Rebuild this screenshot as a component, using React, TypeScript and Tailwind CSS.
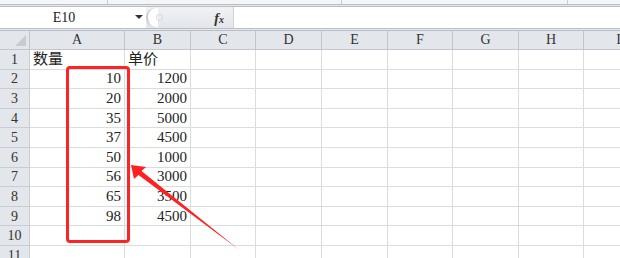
import React from "react";

const cols = [
  { k: "A", w: 95 },
  { k: "B", w: 66 },
  { k: "C", w: 65 },
  { k: "D", w: 66 },
  { k: "E", w: 66 },
  { k: "F", w: 65 },
  { k: "G", w: 66 },
  { k: "H", w: 65 },
  { k: "I", w: 70 },
];

const rows: [string, string][] = [
  ["数量", "单价"],
  ["10", "1200"],
  ["20", "2000"],
  ["35", "5000"],
  ["37", "4500"],
  ["50", "1000"],
  ["56", "3000"],
  ["65", "3500"],
  ["98", "4500"],
  ["", ""],
  ["", ""],
];

export default function App() {
  return (
    <div className="relative w-[620px] h-[258px] overflow-hidden bg-white text-[#222] font-['Liberation_Serif','Noto_Sans_CJK_SC',serif]">
      {/* ribbon bottom */}
      <div className="flex h-[4px] bg-[#f4f5f7]">
        <div className="w-[108px] border-r border-[#c9ccd1]" />
        <div className="w-[234px] border-r border-[#c9ccd1]" />
        <div className="w-[226px] border-r border-[#c9ccd1]" />
        <div className="flex-1" />
      </div>
      <div className="h-[3px] border-y border-[#b9bec5] bg-[#e6e8eb]" />
      {/* formula bar */}
      <div className="flex h-[21px] bg-white">
        <div className="relative flex w-[146px] items-center justify-center pr-[18px] text-[14px]">
          E10
          <div className="absolute right-[3px] top-[8px] h-0 w-0 border-x-[4px] border-t-[4px] border-x-transparent border-t-[#333]" />
        </div>
        <div className="relative flex w-[87px] items-center bg-gradient-to-b from-[#f1f2f4] to-[#e3e6ea]">
          <div className="absolute left-[0px] top-[1px] h-[19px] w-[12px] rounded-l-full border-l-2 border-[#c7ccd3] bg-white" />
          <div className="absolute left-[10px] top-[7px] h-[7px] w-[7px] rounded-full border border-[#d5d9de]" />
          <span className="absolute right-[9px] top-[1px] text-[14px] italic font-bold text-[#333]">
            f<span className="text-[10px]">x</span>
          </span>
        </div>
        <div className="flex-1 border-l border-[#d0d4d9] bg-white" />
      </div>
      <div className="h-[3px] border-y border-[#b9bec5] bg-[#e6e8eb]" />
      {/* header row */}
      <div className="flex h-[19px] bg-[#e3e6eb] border-b border-[#c3c7cd] text-[14px] text-[#333]">
        <div className="relative w-[30px] shrink-0 border-r border-[#c3c7cd]">
          <div className="absolute bottom-[3px] right-[3px] h-0 w-0 border-b-[11px] border-l-[11px] border-b-[#c8ccd2] border-l-transparent" />
        </div>
        {cols.map((c) => (
          <div
            key={c.k}
            className="flex shrink-0 items-center justify-center border-r border-[#c3c7cd] leading-none"
            style={{ width: c.w }}
          >
            {c.k}
          </div>
        ))}
      </div>
      {/* rows */}
      {rows.map((r, i) => (
        <div key={i} className="flex h-[19.6px] text-[15px]">
          <div className="flex w-[30px] shrink-0 items-center justify-center border-r border-b border-[#c9cdd3] bg-[#e3e6eb] text-[14px] text-[#333]">
            {i + 1}
          </div>
          {cols.map((c, j) => {
            const v = j === 0 ? r[0] : j === 1 ? r[1] : "";
            const isText = i === 0;
            return (
              <div
                key={c.k}
                className={`flex shrink-0 items-center border-r border-b border-[#dadcdf] leading-none ${
                  isText ? "justify-start pl-[3px]" : "justify-end pr-[3px]"
                }`}
                style={{ width: c.w }}
              >
                {v}
              </div>
            );
          })}
        </div>
      ))}
      {/* red box */}
      <div className="absolute left-[66px] top-[66px] h-[177px] w-[64px] rounded-[4px] border-[3px] border-[#ff2424]" />
      {/* arrow */}
      <svg className="absolute left-0 top-0" width="620" height="258">
        <polygon
          points="131,165 146,167 141.5,171 238,249 138.5,175 134,179"
          fill="#ff2020"
        />
      </svg>
    </div>
  );
}
